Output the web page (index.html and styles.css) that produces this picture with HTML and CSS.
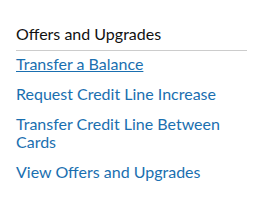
FILE: index.html
```
<!DOCTYPE html>
<html>
<head>
<meta charset="utf-8">
<link rel="stylesheet" href="styles.css">
</head>
<body>
<section class="panel">
  <h2 class="title">Offers and Upgrades</h2>
  <ul class="links">
    <li><a class="link active" href="#">Transfer a Balance</a></li>
    <li><a class="link" href="#">Request Credit Line Increase</a></li>
    <li><a class="link" href="#">Transfer Credit Line Between Cards</a></li>
    <li><a class="link" href="#">View Offers and Upgrades</a></li>
  </ul>
</section>
</body>
</html>
```
FILE: styles.css
```
html, body {
  margin: 0;
  padding: 0;
  background: #fff;
}
body {
  font-family: "Lato", "Open Sans", sans-serif;
}
.panel {
  width: 231px;
  padding: 24px 0 0 16px;
}
.title {
  margin: 0;
  font-size: 16px;
  font-weight: 400;
  color: #111;
  line-height: 20px;
  padding-bottom: 6px;
  border-bottom: 1px solid #cccccc;
}
.links {
  list-style: none;
  margin: 0;
  padding: 4px 0 0;
  display: flex;
  flex-direction: column;
  gap: 12px;
}
.links li {
  display: block;
}
.link {
  font-size: 16px;
  line-height: 18px;
  color: #1a6fb0;
  text-decoration: none;
  display: block;
}
.link.active {
  text-decoration: underline;
}
```
